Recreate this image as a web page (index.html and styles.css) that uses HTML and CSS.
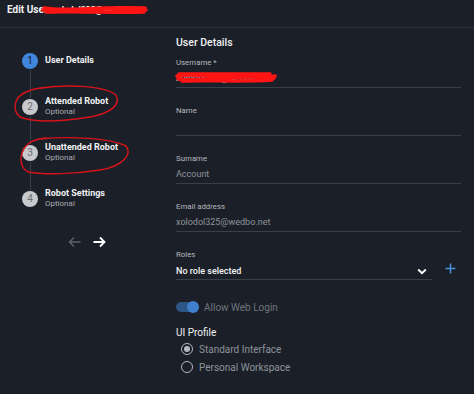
FILE: index.html
```html
<!DOCTYPE html>
<html lang="en">
<head>
<meta charset="utf-8">
<title>Edit User</title>
<link rel="stylesheet" href="styles.css">
</head>
<body>
<div class="page">
  <header class="header">Edit User: <span class="redacted">xolodol325@wedbo.net</span></header>
  <main class="main">
    <nav class="stepper">
      <div class="step">
        <div class="rail"><span class="circle active">1</span><span class="line"></span></div>
        <div class="step-text single"><span class="step-title">User Details</span></div>
      </div>
      <div class="step">
        <div class="rail"><span class="circle">2</span><span class="line"></span></div>
        <div class="step-text"><span class="step-title">Attended Robot</span><span class="step-sub">Optional</span></div>
      </div>
      <div class="step">
        <div class="rail"><span class="circle">3</span><span class="line"></span></div>
        <div class="step-text"><span class="step-title">Unattended Robot</span><span class="step-sub">Optional</span></div>
      </div>
      <div class="step last">
        <div class="rail"><span class="circle">4</span></div>
        <div class="step-text"><span class="step-title">Robot Settings</span><span class="step-sub">Optional</span></div>
      </div>
      <div class="nav-arrows">
        <svg class="arrow dim" width="13" height="12" viewBox="0 0 13 12"><path d="M12.5 6H1.5M6 1.5L1.5 6 6 10.5" fill="none" stroke="currentColor" stroke-width="1.5"/></svg>
        <svg class="arrow" width="13" height="12" viewBox="0 0 13 12"><path d="M0.5 6h11M7 1.5L11.5 6 7 10.5" fill="none" stroke="currentColor" stroke-width="1.8"/></svg>
      </div>
    </nav>
    <section class="form">
      <h2 class="form-title">User Details</h2>
      <div class="field">
        <label class="label">Username *</label>
        <div class="input">xolodol325@wedbo.net</div>
      </div>
      <div class="field">
        <label class="label">Name</label>
        <div class="input"></div>
      </div>
      <div class="field">
        <label class="label">Surname</label>
        <div class="input muted">Account</div>
      </div>
      <div class="field">
        <label class="label">Email address</label>
        <div class="input muted">xolodol325@wedbo.net</div>
      </div>
      <div class="field roles">
        <label class="label">Roles</label>
        <div class="roles-row">
          <div class="input select">
            <span>No role selected</span>
            <svg width="10" height="7" viewBox="0 0 10 7"><path d="M1.2 1.5L5 5.2l3.8-3.7" fill="none" stroke="#fff" stroke-width="1.9"/></svg>
          </div>
          <svg class="plus" width="11" height="11" viewBox="0 0 11 11"><path d="M5.5 0.5v10M0.5 5.5h10" stroke="#4a8fdc" stroke-width="1.5"/></svg>
        </div>
      </div>
      <div class="toggle-row">
        <span class="toggle"><span class="thumb"></span></span>
        <span class="toggle-label">Allow Web Login</span>
      </div>
      <div class="profile-title">UI Profile</div>
      <div class="radio-row"><span class="radio checked"></span><span>Standard Interface</span></div>
      <div class="radio-row"><span class="radio"></span><span>Personal Workspace</span></div>
    </section>
  </main>
  <svg class="scribbles" width="474" height="394" viewBox="0 0 474 394">
    <g fill="none" stroke="#ff1414" stroke-linecap="round" stroke-linejoin="round">
      <path d="M43 10 C60 7 80 13 100 9 C115 7 130 12 146 10 M44 8 C70 12 95 6 145 8 M46 12 C80 11 115 13 144 12" stroke-width="3.5"/>
      <path d="M177 76 C200 72 220 80 240 75 C255 72 265 79 275 76 M178 79 C205 82 230 74 274 78 M179 74 L270 74 M182 81 C210 80 240 82 272 80" stroke-width="3.5"/>
    </g>
    <g fill="none" stroke="#d8121a" stroke-linecap="round" stroke-linejoin="round" stroke-width="1.4">
      <path d="M40 88 C70 84 105 86 116 95 C121 104 112 113 90 117 C65 121 35 123 20 117 C12 110 14 98 24 93 C30 90 36 88 44 88"/>
      <path d="M40 139 C70 136 110 138 126 146 C132 154 124 166 100 170 C75 174 45 175 28 172 C18 166 20 153 26 146 C30 141 36 139 46 138"/>
    </g>
  </svg>
</div>
</body>
</html>
```

FILE: styles.css
```css
* { box-sizing: border-box; }
html, body { margin: 0; padding: 0; }
body {
  background: #1b2028;
  font-family: Roboto, "Liberation Sans", Arial, sans-serif;
  color: #e9ebee;
  width: 474px;
  height: 394px;
  overflow: hidden;
}
.page { position: relative; width: 474px; height: 394px; }
.header {
  height: 28px;
  padding: 3px 7px 0;
  font-size: 10px;
  font-weight: 700;
  line-height: 14px;
  border-bottom: 1px solid #2c323b;
  color: #f2f3f5;
}
.redacted { font-size: 8.5px; }
.main { display: grid; grid-template-columns: 176px 1fr; }

.stepper { padding: 25px 0 0 22px; display: flex; flex-direction: column; }
.step { display: flex; gap: 7px; height: 46px; }
.step.last { height: 43px; }
.rail { display: flex; flex-direction: column; align-items: center; width: 16px; }
.circle {
  width: 16px; height: 16px; border-radius: 50%;
  background: #c7c9cc; color: #6b6f75;
  font-size: 10px; line-height: 16px; text-align: center;
  flex: none;
}
.circle.active { background: #3f86dc; color: #1b2028; }
.line { width: 1px; flex: 1; background: #3a414b; margin: 1px 0; }
.step-text { display: flex; flex-direction: column; margin-top: -3px; }
.step-text.single { margin-top: 2px; }
.step-title { font-size: 9px; font-weight: 700; line-height: 11px; color: #f0f1f3; }
.step-sub { font-size: 8px; line-height: 9px; color: #a9adb3; }
.nav-arrows { display: flex; gap: 12px; padding-left: 46px; margin-top: 2px; }
.arrow { color: #ffffff; }
.arrow.dim { color: #5c626b; }

.form { padding: 7px 13px 0 0; }
.form-title { margin: 0 0 6px; font-size: 10.5px; line-height: 16px; font-weight: 500; color: #f0f1f3; }
.field { margin-bottom: 17px; }
.label { display: block; font-size: 7.8px; line-height: 12px; color: #b4b8bd; }
.input {
  height: 19px;
  border-bottom: 1px solid #3a404a;
  font-size: 9px;
  line-height: 16px;
  padding-top: 1px;
  color: #e9ebee;
}
.input.muted { color: #8d939b; }
.roles { margin-bottom: 0; }
.roles-row { display: flex; align-items: center; gap: 12px; }
.input.select {
  flex: 1; display: flex; justify-content: space-between; align-items: center;
  padding-right: 5px; font-weight: 500; color: #f3f4f6; max-width: 256px;
}
.input.select svg { margin-top: 1px; }
.plus { margin-top: -4px; margin-left: 1px; }

.toggle-row { display: flex; align-items: center; gap: 6px; margin-top: 20px; height: 14px; }
.toggle { width: 22px; height: 10px; border-radius: 5px; background: #2d5686; display: inline-flex; justify-content: flex-end; align-items: center; }
.thumb { width: 12px; height: 12px; border-radius: 50%; background: #3f7fcc; margin-right: -1px; }
.toggle-label { font-size: 10px; color: #6e747c; }
.profile-title { margin-top: 12px; font-size: 10px; line-height: 14px; color: #f0f1f3; }
.radio-row { display: flex; align-items: center; gap: 6px; height: 18px; padding-left: 5px; font-size: 10px; color: #8d939b; }
.radio-row:first-of-type { margin-top: 2px; }
.radio { width: 12px; height: 12px; border-radius: 50%; border: 1.3px solid #b6bac0; display: inline-flex; align-items: center; justify-content: center; }
.radio.checked::after { content: ""; width: 6px; height: 6px; border-radius: 50%; background: #b6bac0; }

.scribbles { position: absolute; left: 0; top: 0; pointer-events: none; }
```
